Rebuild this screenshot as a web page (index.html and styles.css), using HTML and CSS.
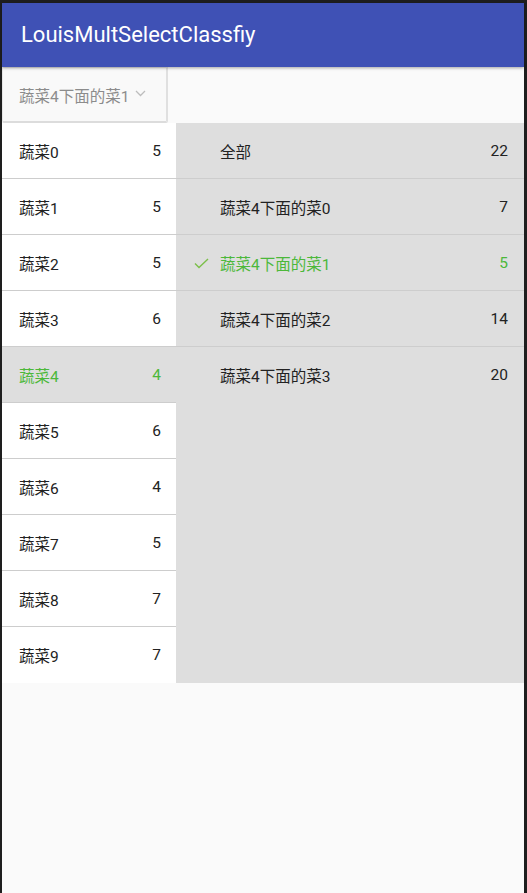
FILE: index.html
```html
<!DOCTYPE html>
<html>
<head>
<meta charset="utf-8">
<link rel="stylesheet" href="styles.css">
</head>
<body>
<div class="screen">
  <header class="toolbar">LouisMultSelectClassfiy</header>
  <div class="filterbar">
    <div class="dropdown">
      <span>蔬菜4下面的菜1</span>
      <svg class="chev" width="11" height="7" viewBox="0 0 11 7"><path d="M1 1 L5.5 5.5 L10 1" fill="none" stroke="#bdbdbd" stroke-width="1.3"/></svg>
    </div>
  </div>
  <div class="lists">
    <ul class="left">
      <li><span>蔬菜0</span><span>5</span></li>
      <li><span>蔬菜1</span><span>5</span></li>
      <li><span>蔬菜2</span><span>5</span></li>
      <li><span>蔬菜3</span><span>6</span></li>
      <li class="sel"><span>蔬菜4</span><span>4</span></li>
      <li><span>蔬菜5</span><span>6</span></li>
      <li><span>蔬菜6</span><span>4</span></li>
      <li><span>蔬菜7</span><span>5</span></li>
      <li><span>蔬菜8</span><span>7</span></li>
      <li><span>蔬菜9</span><span>7</span></li>
    </ul>
    <ul class="right">
      <li><span class="check"></span><span class="name">全部</span><span>22</span></li>
      <li><span class="check"></span><span class="name">蔬菜4下面的菜0</span><span>7</span></li>
      <li class="sel"><span class="check"><svg width="15" height="11" viewBox="0 0 15 11"><path d="M1 5.5 L5 9.5 L14 1" fill="none" stroke="#7cbf4a" stroke-width="1.4"/></svg></span><span class="name">蔬菜4下面的菜1</span><span>5</span></li>
      <li><span class="check"></span><span class="name">蔬菜4下面的菜2</span><span>14</span></li>
      <li><span class="check"></span><span class="name">蔬菜4下面的菜3</span><span>20</span></li>
    </ul>
  </div>
</div>
</body>
</html>
```

FILE: styles.css
```css
* { box-sizing: border-box; }
html, body { margin: 0; padding: 0; }
body {
  background: #1e1e1e;
  width: 527px;
  height: 893px;
  overflow: hidden;
  font-family: Roboto, "Noto Sans CJK SC", sans-serif;
}
.screen {
  margin: 3px 0 0 2px;
  width: 522px;
  height: 890px;
  background: #fafafa;
  display: flex;
  flex-direction: column;
}
.toolbar {
  height: 64px;
  flex: none;
  background: #3f51b5;
  color: #fff;
  font-size: 22px;
  display: flex;
  align-items: center;
  padding-left: 19px;
  padding-bottom: 2px;
  box-shadow: 0 1px 3px rgba(0,0,0,0.35);
  position: relative;
  z-index: 2;
}
.filterbar {
  height: 56px;
  flex: none;
  display: flex;
}
.dropdown {
  width: 166px;
  height: 56px;
  background: #f9f9f9;
  border: 1px solid #e6e6e6;
  border-bottom: 2px solid #dcdcdc;
  border-right: 2px solid #e0e0e0;
  border-radius: 0 0 2px 2px;
  display: flex;
  align-items: center;
  padding-left: 16px;
  color: #8c8c8c;
  font-size: 15.5px;
  gap: 6px;
}
.chev { margin-top: -2px; }
.lists {
  display: flex;
  height: 560px;
  flex: none;
}
ul { list-style: none; margin: 0; padding: 0; }
.left {
  width: 174px;
  background: #fff;
}
.right {
  flex: 1;
  background: #dedede;
}
li {
  height: 56px;
  display: flex;
  align-items: center;
  font-size: 15.5px;
  color: #222;
  border-bottom: 1px solid #cdcdcd;
}
li:last-child { border-bottom: none; }
.left li {
  justify-content: space-between;
  padding: 0 15px 0 17px;
}
.left li.sel { background: #dedede; }
li.sel { color: #4cb83a; }
.right li { padding: 0 16px 0 18px; }
.check {
  width: 26px;
  flex: none;
  display: flex;
  align-items: center;
  padding-top: 1px;
}
.right .name { flex: 1; }
```
